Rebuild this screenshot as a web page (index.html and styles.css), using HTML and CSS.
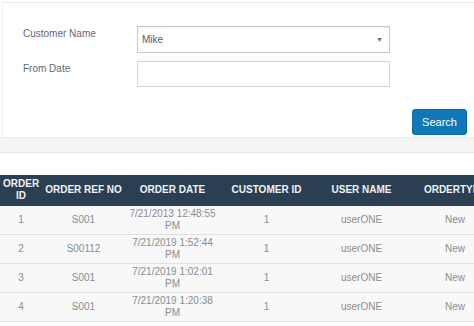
FILE: index.html
```html
<!DOCTYPE html>
<html>
<head>
<meta charset="utf-8">
<link rel="stylesheet" href="styles.css">
</head>
<body>
<div class="page">
  <div class="top">
    <div class="panel">
      <div class="form-row">
        <label class="label">Customer Name</label>
        <div class="select">
          <span class="select-value">Mike</span>
          <span class="arrow">&#9660;</span>
        </div>
      </div>
      <div class="form-row">
        <label class="label">From Date</label>
        <div class="input"></div>
      </div>
      <div class="actions">
        <button class="btn">Search</button>
      </div>
    </div>
  </div>
  <div class="band"></div>
  <div class="spacer"></div>
  <div class="table-wrap">
    <table class="grid">
      <colgroup>
        <col class="c1"><col class="c2"><col class="c3"><col class="c4"><col class="c5"><col class="c6">
      </colgroup>
      <thead>
        <tr>
          <th>ORDER ID</th>
          <th>ORDER REF NO</th>
          <th>ORDER DATE</th>
          <th>CUSTOMER ID</th>
          <th>USER NAME</th>
          <th>ORDERTYPE</th>
        </tr>
      </thead>
      <tbody>
        <tr><td>1</td><td>S001</td><td>7/21/2013 12:48:55 PM</td><td>1</td><td>userONE</td><td>New</td></tr>
        <tr><td>2</td><td>S00112</td><td>7/21/2019 1:52:44 PM</td><td>1</td><td>userONE</td><td>New</td></tr>
        <tr><td>3</td><td>S001</td><td>7/21/2019 1:02:01 PM</td><td>1</td><td>userONE</td><td>New</td></tr>
        <tr><td>4</td><td>S001</td><td>7/21/2019 1:20:38 PM</td><td>1</td><td>userONE</td><td>New</td></tr>
      </tbody>
    </table>
  </div>
</div>
</body>
</html>
```
FILE: styles.css
```css
html, body {
  margin: 0;
  padding: 0;
  background: #ffffff;
}
body {
  font-family: "Liberation Sans", Arial, sans-serif;
  font-size: 10px;
  width: 474px;
  height: 326px;
  overflow: hidden;
}
.page {
  width: 474px;
}
.top {
  padding-top: 2px;
  margin-left: 2px;
  border-left: 1px solid #f0f0f0;
  background: #fff;
}
.panel {
  border-top: 1px solid #e8e8e8;
  padding-top: 23px;
  padding-bottom: 2px;
  display: flex;
  flex-direction: column;
}
.form-row {
  display: flex;
  align-items: flex-start;
  padding-left: 20px;
  margin-bottom: 8px;
}
.label {
  width: 114px;
  color: #5e6875;
  font-size: 10px;
  padding-top: 2px;
  line-height: 12px;
}
.select {
  box-sizing: border-box;
  width: 253px;
  height: 27px;
  border: 1px solid #c9c9c9;
  box-shadow: inset 0 1px 1px rgba(0,0,0,0.06);
  display: flex;
  align-items: center;
  justify-content: space-between;
  padding: 0 6px 0 4px;
  background: #fff;
}
.select-value {
  color: #555c66;
  font-size: 10px;
}
.arrow {
  color: #6a6f75;
  font-size: 7px;
}
.input {
  box-sizing: border-box;
  width: 253px;
  height: 26px;
  border: 1px solid #d6d6d6;
  background: #fff;
}
.actions {
  display: flex;
  justify-content: flex-end;
  padding-right: 7px;
  margin-top: 14px;
}
.btn {
  box-sizing: border-box;
  width: 55px;
  height: 26px;
  border: 1px solid #0b6aa5;
  border-radius: 3px;
  background: #0f78b8;
  color: #fff;
  font-family: "Liberation Sans", Arial, sans-serif;
  font-size: 11px;
  padding: 0;
}
.band {
  height: 14px;
  background: #f5f5f5;
  border-top: 1px solid #ebebeb;
  border-bottom: 1px solid #e4e4e4;
}
.spacer {
  height: 22px;
}
.table-wrap {
  width: 474px;
  overflow: hidden;
}
.grid {
  border-collapse: collapse;
  table-layout: fixed;
  width: 500px;
}
.c1 { width: 42px; }
.c2 { width: 83px; }
.c3 { width: 95px; }
.c4 { width: 93px; }
.c5 { width: 97px; }
.c6 { width: 90px; }
.grid th {
  background: #2a3f52;
  color: #eef3f7;
  font-weight: bold;
  font-size: 10px;
  line-height: 12px;
  padding: 3px 3px 4px;
  text-align: center;
  vertical-align: middle;
}
.grid td {
  background: #f8f8f8;
  color: #8a8d91;
  font-size: 10px;
  line-height: 12px;
  padding: 2px 4px 2px;
  text-align: center;
  vertical-align: middle;
  border-bottom: 1px solid #e1e1e1;
  height: 24px;
}
```
